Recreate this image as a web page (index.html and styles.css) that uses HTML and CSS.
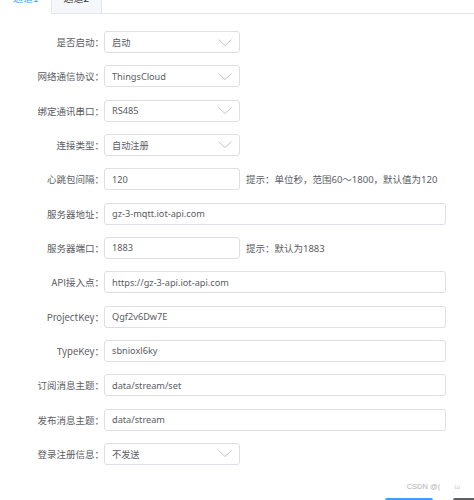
FILE: index.html
```html
<!DOCTYPE html>
<html lang="zh">
<head>
<meta charset="utf-8">
<link rel="stylesheet" href="styles.css">
</head>
<body>
<div class="page">
  <div class="tabs">
    <div class="tab active">通道1</div>
    <div class="tab">通道2</div>
    <div class="tab-rest"></div>
  </div>
  <div class="form">
    <div class="row">
      <label class="label">是否启动：</label>
      <div class="box short select"><span>启动</span><svg class="chev" viewBox="0 0 14 7" width="14" height="7"><polyline points="0.5,0.5 7,6.5 13.5,0.5"/></svg></div>
    </div>
    <div class="row">
      <label class="label">网络通信协议：</label>
      <div class="box short select"><span>ThingsCloud</span><svg class="chev" viewBox="0 0 14 7" width="14" height="7"><polyline points="0.5,0.5 7,6.5 13.5,0.5"/></svg></div>
    </div>
    <div class="row">
      <label class="label">绑定通讯串口：</label>
      <div class="box short select"><span>RS485</span><svg class="chev" viewBox="0 0 14 7" width="14" height="7"><polyline points="0.5,0.5 7,6.5 13.5,0.5"/></svg></div>
    </div>
    <div class="row">
      <label class="label">连接类型：</label>
      <div class="box short select"><span>自动注册</span><svg class="chev" viewBox="0 0 14 7" width="14" height="7"><polyline points="0.5,0.5 7,6.5 13.5,0.5"/></svg></div>
    </div>
    <div class="row">
      <label class="label">心跳包间隔：</label>
      <div class="box short"><span>120</span></div>
      <span class="hint">提示：单位秒，范围60～1800，默认值为120</span>
    </div>
    <div class="row">
      <label class="label">服务器地址：</label>
      <div class="box wide"><span>gz-3-mqtt.iot-api.com</span></div>
    </div>
    <div class="row">
      <label class="label">服务器端口：</label>
      <div class="box short"><span>1883</span></div>
      <span class="hint">提示：默认为1883</span>
    </div>
    <div class="row">
      <label class="label">API接入点：</label>
      <div class="box wide"><span>https://gz-3-api.iot-api.com</span></div>
    </div>
    <div class="row">
      <label class="label">ProjectKey：</label>
      <div class="box wide"><span>Qgf2v6Dw7E</span></div>
    </div>
    <div class="row">
      <label class="label">TypeKey：</label>
      <div class="box wide"><span>sbnioxl6ky</span></div>
    </div>
    <div class="row">
      <label class="label">订阅消息主题：</label>
      <div class="box wide"><span>data/stream/set</span></div>
    </div>
    <div class="row">
      <label class="label">发布消息主题：</label>
      <div class="box wide"><span>data/stream</span></div>
    </div>
    <div class="row">
      <label class="label">登录注册信息：</label>
      <div class="box short select"><span>不发送</span><svg class="chev" viewBox="0 0 14 7" width="14" height="7"><polyline points="0.5,0.5 7,6.5 13.5,0.5"/></svg></div>
    </div>
  </div>
  <div class="footer">
    <div class="btn primary"></div>
    <div class="btn dark"></div>
    <div class="watermark"><span>CSDN @(</span><span class="wm-tail">ω</span></div>
  </div>
</div>
</body>
</html>
```
FILE: styles.css
```css
html, body {
  margin: 0;
  padding: 0;
  background: #ffffff;
}
body {
  font-family: "Noto Sans", "Noto Sans CJK SC", sans-serif;
  font-size: 9.5px;
  color: #606266;
  overflow: hidden;
}
.page {
  width: 474px;
  height: 500px;
  overflow: hidden;
  position: relative;
}
.tabs {
  display: flex;
  margin-top: -14px;
  height: 28px;
}
.tab {
  box-sizing: border-box;
  height: 28px;
  line-height: 24px;
  padding: 0 12px;
  font-size: 10px;
  font-family: "Noto Sans CJK SC", sans-serif;
  color: #303133;
  background: #f5f7fa;
  border: 1px solid #e4e7ed;
  border-top: none;
}
.tab.active {
  color: #409eff;
  background: #ffffff;
  border-color: transparent;
  border-bottom: 1px solid #ffffff;
  padding: 0 11px 0 12px;
}
.tab-rest {
  flex: 1;
  border-bottom: 1px solid #e4e7ed;
}
.form {
  padding-top: 17px;
  display: flex;
  flex-direction: column;
  gap: 12.33px;
}
.row {
  display: flex;
  align-items: center;
  height: 22px;
}
.label {
  width: 104px;
  flex: none;
  text-align: right;
  color: #5a5d63;
  font-family: "Noto Sans CJK SC", sans-serif;
  font-size: 9.5px;
  white-space: nowrap;
  box-sizing: border-box;
}
.box {
  box-sizing: border-box;
  height: 22px;
  border: 1px solid #dcdfe6;
  border-radius: 3px;
  display: flex;
  align-items: center;
  padding-left: 7px;
  padding-right: 7px;
  color: #5a5d63;
  font-family: "Noto Sans", "Noto Sans CJK SC", sans-serif;
  font-size: 9.2px;
  white-space: nowrap;
  flex: none;
}
.box.short { width: 136px; }
.box.wide { width: 342px; }
.box.select {
  justify-content: space-between;
}
.chev {
  display: block;
  fill: none;
  stroke: #c0c4cc;
  stroke-width: 1;
}
.hint {
  margin-left: 6px;
  color: #5a5d63;
  font-family: "Noto Sans", "Noto Sans CJK SC", sans-serif;
  white-space: nowrap;
}
.footer {
  display: flex;
  justify-content: flex-end;
  gap: 20px;
  margin-top: 33px;
  position: relative;
}
.btn {
  height: 24px;
  border-radius: 2px;
}
.btn.primary {
  width: 48px;
  background: #409eff;
}
.btn.dark {
  width: 24px;
  background: #5f6061;
  margin-right: -3px;
}
.watermark {
  position: absolute;
  right: 14px;
  top: -16px;
  font-family: "Liberation Sans", sans-serif;
  font-size: 7.5px;
  color: #aeb2b8;
  white-space: nowrap;
}
.wm-tail {
  margin-left: 14px;
  color: #c8ccd0;
}
```
